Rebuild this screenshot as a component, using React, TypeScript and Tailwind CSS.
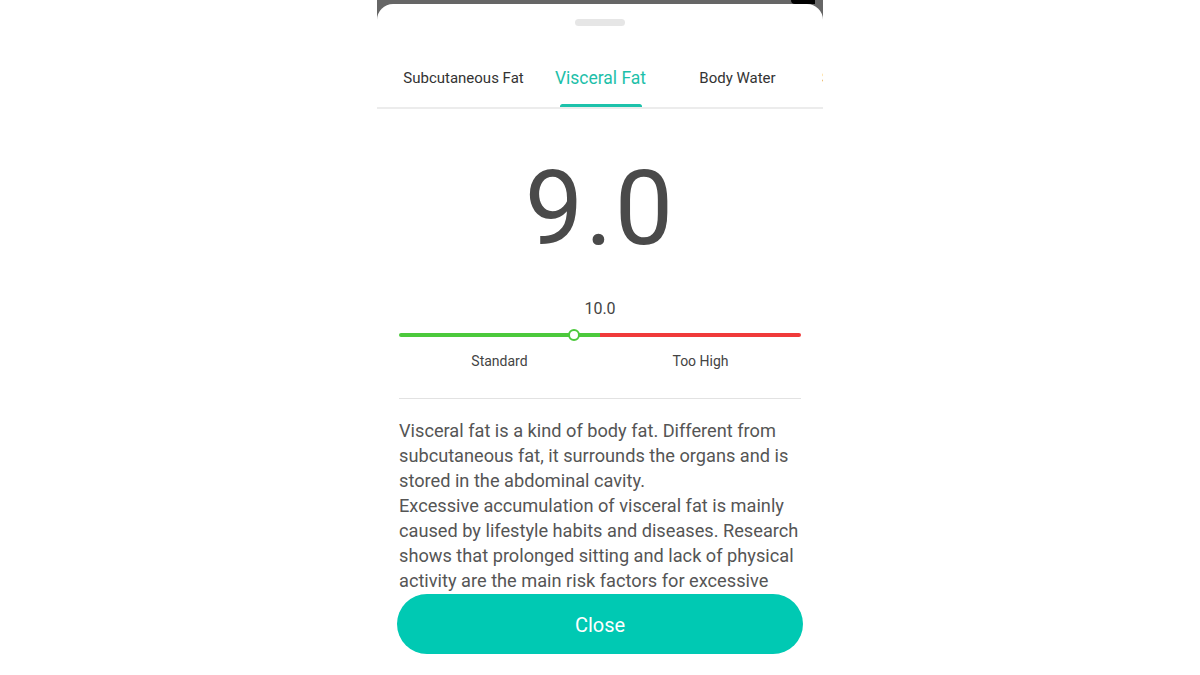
import React from "react";

const lines = [
  "Visceral fat is a kind of body fat. Different from",
  "subcutaneous fat, it surrounds the organs and is",
  "stored in the abdominal cavity.",
  "Excessive accumulation of visceral fat is mainly",
  "caused by lifestyle habits and diseases. Research",
  "shows that prolonged sitting and lack of physical",
  "activity are the main risk factors for excessive",
  "visceral fat accumulation.",
];

export default function App() {
  const tabs = ["Subcutaneous Fat", "Visceral Fat", "Body Water", "Skeletal Muscle"];
  return (
    <div
      className="w-[1200px] h-[675px] bg-white flex justify-center overflow-hidden"
      style={{ fontFamily: "Roboto, 'Noto Sans', sans-serif" }}
    >
      <div className="w-[446px] h-full bg-[#666666] relative flex flex-col">
        <div className="absolute top-0 right-[8px] w-[24px] h-[4px] bg-black rounded-bl-[4px]" />
        <div className="mt-[4px] flex-1 min-h-0 bg-white rounded-t-[16px] flex flex-col overflow-hidden">
          <div className="mt-[15px] mx-auto w-[50px] h-[7px] rounded-full bg-[#e6e6e6]" />
          <div className="mt-[40px] flex pl-[18px] border-b-2 border-[#ececec] overflow-hidden">
            {tabs.map((t, i) => (
              <div key={t} className="w-[137px] shrink-0 flex flex-col items-center">
                <div
                  className={
                    i === 1
                      ? "h-[24px] leading-[24px] text-[17.5px] text-[#1dbfa9] whitespace-nowrap"
                      : "h-[24px] leading-[24px] text-[15px] text-[#333333] whitespace-nowrap"
                  }
                >
                  {t}
                </div>
                <div
                  className={
                    i === 1
                      ? "mt-[14px] w-[82px] h-[5px] rounded-full bg-[#1dc2ab] -mb-[2px]"
                      : "mt-[14px] w-[82px] h-[5px] -mb-[2px]"
                  }
                />
              </div>
            ))}
          </div>
          <div className="mt-[48px] h-[104px] leading-[104px] text-[104px] text-center text-[#4a4a4a] tracking-[2px]">
            9.0
          </div>
          <div className="mt-[38px] h-[20px] leading-[20px] text-[16px] text-center text-[#444444]">
            10.0
          </div>
          <div className="mx-[22px]">
            <div className="mt-[14px] h-[4px] flex relative">
              <div className="flex-1 h-full bg-[#4cc93c] rounded-l-full" />
              <div className="flex-1 h-full bg-[#f03a3a] rounded-r-full" />
              <div className="absolute left-[169px] -top-[4px] w-[12px] h-[12px] rounded-full bg-white border-2 border-[#4cc93c]" />
            </div>
            <div className="mt-[14px] flex text-[14px] leading-[20px] text-[#444444]">
              <div className="flex-1 text-center">Standard</div>
              <div className="flex-1 text-center">Too High</div>
            </div>
            <div className="mt-[27px] h-px bg-[#e2e2e2]" />
          </div>
          <div className="flex-1 min-h-0 overflow-hidden px-[22px] pt-[19px]">
            <p className="text-[18.2px] leading-[25px] text-[#555555] whitespace-nowrap">
              {lines.map((l, i) => (
                <React.Fragment key={i}>
                  {l}
                  <br />
                </React.Fragment>
              ))}
            </p>
          </div>
          <div className="px-[20px] pb-[21px]">
            <button className="w-full h-[60px] rounded-full bg-[#00c9b3] text-white text-[20px] pt-[2px]">
              Close
            </button>
          </div>
        </div>
      </div>
    </div>
  );
}
